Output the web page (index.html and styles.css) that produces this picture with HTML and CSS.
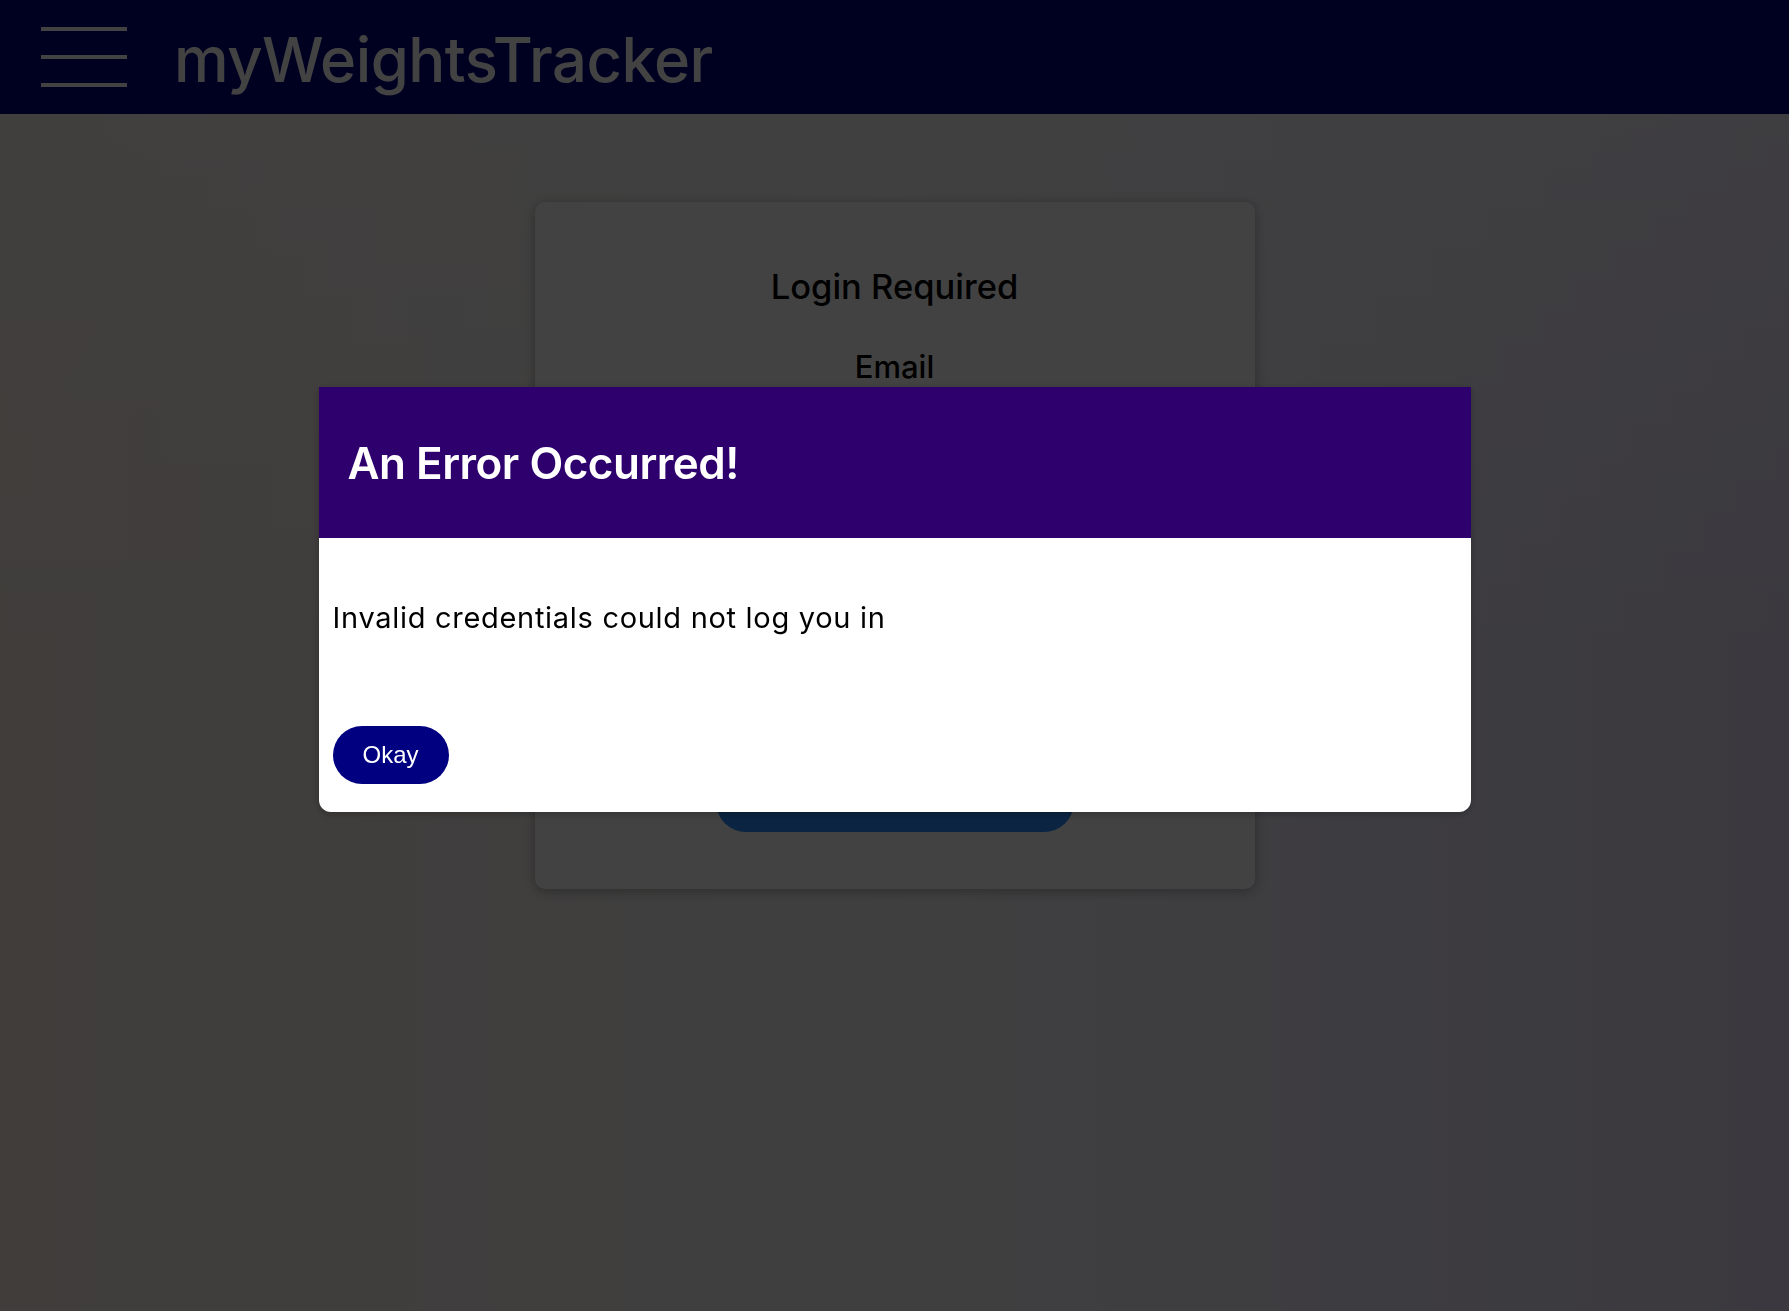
FILE: index.html
```html
<!DOCTYPE html>
<html lang="en">
<head>
  <meta charset="UTF-8" />
  <meta name="viewport" content="width=device-width, initial-scale=1.0" />
  <title>myWeightsTracker</title>
  <link rel="stylesheet" href="styles.css">
</head>
<body>
  <header class="topbar">
    <button class="menu-toggle" aria-label="Menu">
      <span></span>
      <span></span>
      <span></span>
    </button>
    <h1 class="brand">myWeightsTracker</h1>
  </header>

  <main class="page">
    <form class="login-card">
      <h2>Login Required</h2>
      <label for="email">Email</label>
      <input id="email" type="email" />
      <label for="password">Password</label>
      <input id="password" type="password" />
      <button type="button" class="login-btn">Login</button>
    </form>
  </main>

  <div class="backdrop"></div>
  <div class="modal">
    <header class="modal-header">
      <h2>An Error Occurred!</h2>
    </header>
    <div class="modal-content">
      <p>Invalid credentials could not log you in</p>
    </div>
    <footer class="modal-actions">
      <button type="button" class="okay-btn">Okay</button>
    </footer>
  </div>
</body>
</html>
```

FILE: styles.css
```css
* {
  box-sizing: border-box;
}

body {
  margin: 0;
  min-height: 100vh;
  font-family: "Inter", "Noto Sans", sans-serif;
  background:
    linear-gradient(to bottom, rgba(255,255,255,0.5), rgba(255,255,255,0) 50%),
    linear-gradient(to right, #f8ece4, #f4f4f6 50%, #e4dcf4);
}

.topbar {
  height: 114px;
  background: #000080;
  display: flex;
  align-items: center;
  padding: 0 41px;
}

.menu-toggle {
  width: 86px;
  display: flex;
  flex-direction: column;
  gap: 24px;
  padding: 0;
  border: none;
  background: none;
}

.menu-toggle span {
  display: block;
  height: 4px;
  background: #fff;
}

.brand {
  margin: 0 0 0 47px;
  color: #fff;
  font-size: 61.5px;
  font-weight: 500;
  letter-spacing: -0.5px;
  padding-top: 4px;
}

.page {
  display: flex;
  justify-content: center;
  padding-top: 88px;
}

.login-card {
  width: 720px;
  height: 687px;
  background: #fff;
  border-radius: 10px;
  box-shadow: 0 2px 12px rgba(0,0,0,0.3);
  display: flex;
  flex-direction: column;
  align-items: center;
  padding: 64px 40px 57px;
}

.login-card h2 {
  margin: 0 0 41px;
  font-size: 34.5px;
  font-weight: 500;
  line-height: 1.2;
}

.login-card label {
  font-size: 31px;
  font-weight: 500;
  line-height: 1.2;
}

.login-card input {
  width: 80%;
  height: 48px;
  margin: 12px 0 24px;
  border: 1px solid #ccc;
  border-radius: 6px;
}

.login-btn {
  margin-top: auto;
  width: 358px;
  height: 72px;
  border: none;
  border-radius: 30px;
  background: #288cff;
  color: #fff;
  font-size: 20px;
}

.backdrop {
  position: fixed;
  inset: 0;
  background: rgba(0,0,0,0.74);
  z-index: 10;
}

.modal {
  position: fixed;
  top: 387px;
  left: calc(50% - 576px);
  width: 1152px;
  background: #fff;
  border-radius: 0 0 12px 12px;
  box-shadow: 0 2px 8px rgba(0,0,0,0.26);
  z-index: 100;
}

.modal-header {
  height: 151px;
  background: #2d006e;
  display: flex;
  align-items: center;
  padding: 0 29px;
}

.modal-header h2 {
  margin: 0;
  color: #fff;
  font-size: 44px;
  font-weight: 600;
  letter-spacing: -0.5px;
}

.modal-content {
  padding: 60px 14px 0;
}

.modal-content p {
  margin: 0;
  font-size: 29px;
  letter-spacing: 0.7px;
  line-height: 40px;
}

.modal-actions {
  padding: 88px 14px 28px;
}

.okay-btn {
  height: 58px;
  padding: 0 30px;
  border: none;
  border-radius: 29px;
  background: #000080;
  color: #fff;
  font-family: "Liberation Sans", Arial, sans-serif;
  font-size: 24px;
}
```
